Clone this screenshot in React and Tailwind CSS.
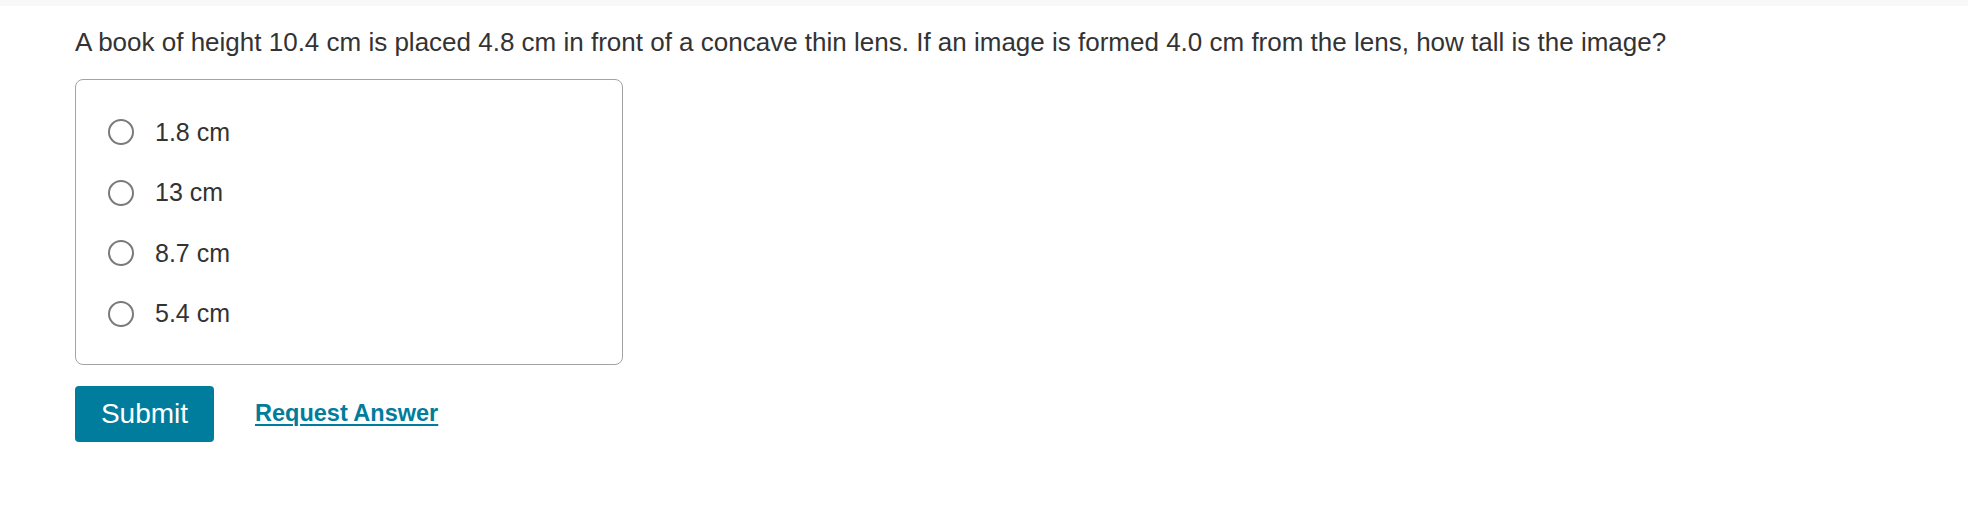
export default function App() {
  const options = ['1.8 cm', '13 cm', '8.7 cm', '5.4 cm']

  return (
    <div className="min-h-[520px] bg-white text-[#333333]" style={{ fontFamily: '"Liberation Sans", Arial, sans-serif' }}>
      <div className="h-[6px] bg-[#f8f8f8]" />

      <div className="pl-[75px] pt-[18px]">
        <p className="text-[26px] leading-[36px]">
          A book of height 10.4 cm is placed 4.8 cm in front of a concave thin lens. If an image is formed 4.0 cm from the lens, how tall is the image?
        </p>

        <div className="mt-[19px] w-[548px] rounded-[8px] border-[1.5px] border-[#a3a3a3] pt-[22px] pb-[20px] pl-[32px]">
          {options.map((opt) => (
            <label key={opt} className="flex h-[60.5px] items-center">
              <span className="h-[26px] w-[26px] rounded-full border-2 border-[#7a7a7a] bg-white" />
              <span className="ml-[21px] text-[25px]">{opt}</span>
            </label>
          ))}
        </div>

        <div className="mt-[21px] flex items-center">
          <button className="flex h-[56px] w-[139px] items-center justify-center rounded-[4px] bg-[#007c9c] text-[28px] text-white">
            Submit
          </button>
          <a href="#" className="ml-[41px] text-[23.5px] font-bold text-[#007c9c] underline decoration-2 underline-offset-[3px]">
            Request Answer
          </a>
        </div>
      </div>
    </div>
  )
}
